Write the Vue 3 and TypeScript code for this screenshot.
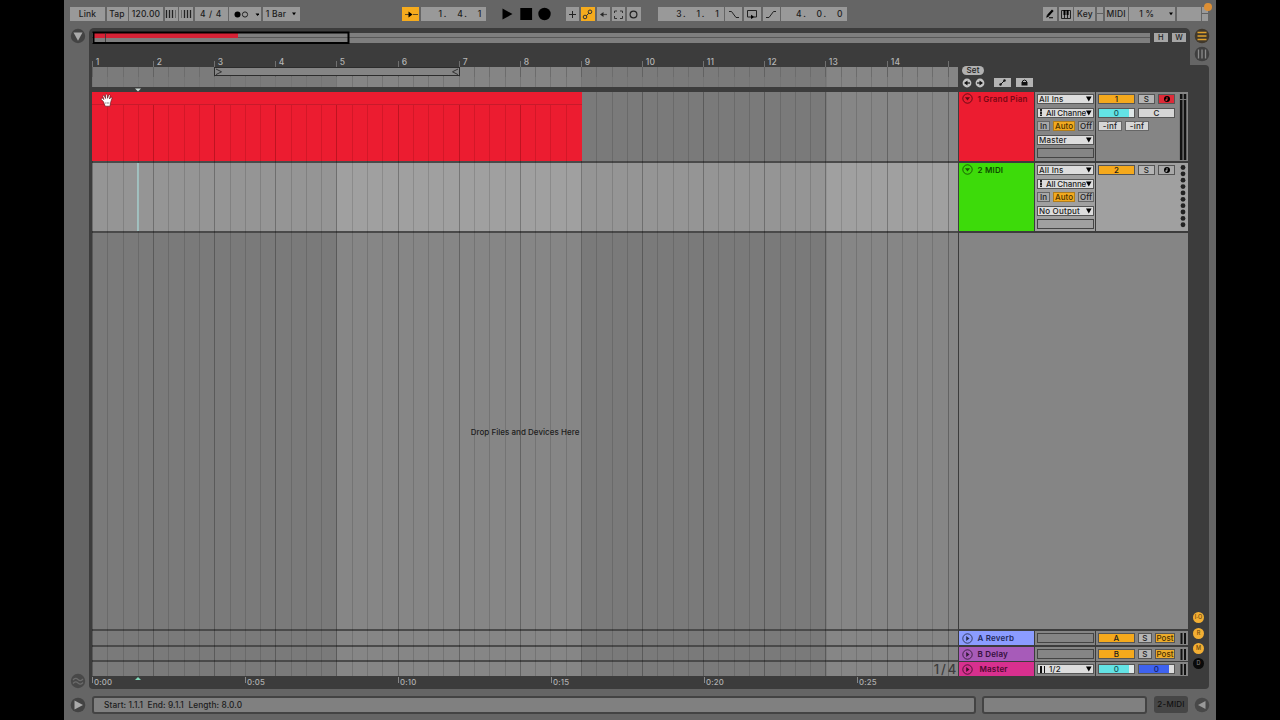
<script setup lang="ts">
interface Track {
  id: string
  name: string
  number: string
  output: string
  armed: boolean
}

const tracks: Track[] = [
  { id: 'piano', name: '1 Grand Pian', number: '1', output: 'Master', armed: true },
  { id: 'midi', name: '2 MIDI', number: '2', output: 'No Output', armed: false },
]
const returns = [
  { id: 'reverb', name: 'A Reverb', letter: 'A' },
  { id: 'delay', name: 'B Delay', letter: 'B' },
]

const BEAT = 15.28
const beats = Array.from({ length: 57 }, (_, i) => ({
  x: Math.round(i * BEAT) + 0.5,
  bar: i % 4 === 0,
}))
const clipBeats = beats.slice(1, 32)
const bars = Array.from({ length: 15 }, (_, i) => ({
  x: Math.round(i * BEAT * 4) + 0.5,
  label: i < 14 ? String(i + 1) : '',
}))
const times = ['0:00', '0:05', '0:10', '0:15', '0:20', '0:25'].map((label, i) => ({
  label,
  x: Math.round(i * 153) + 0.5,
}))
const dots = Array.from({ length: 10 }, (_, i) => 2 + i * 6.36)
</script>

<template>
  <div class="screen">
    <div class="live">
      <header class="toolbar">
        <div class="group g-tempo">
          <span class="b">Link</span>
          <span class="b">Tap</span>
          <span class="b">120.00</span>
          <span class="b"><svg width="12" height="8"><path d="M1.5 0v8M4.5 0v8M7.500 0v8" stroke="#222" stroke-width="1.300" /><path d="M10.500 0v8" stroke="#666" /></svg></span>
          <span class="b"><svg width="12" height="8"><path d="M1.500 0v8" stroke="#666" /><path d="M4.500 0v8M7.500 0v8M10.500 0v8" stroke="#222" stroke-width="1.300" /></svg></span>
          <span class="b sig">4 / 4</span>
          <span class="b"><svg width="28" height="9"><circle cx="6.500" cy="4.500" r="3" /><circle cx="14" cy="4.500" r="2.600" fill="none" stroke="#222" /><path d="M24.500 3.500h4l-2 2.600z" /></svg></span>
          <span class="b quant">1 Bar<svg width="4" height="4"><path d="M0 .5h4L2 3.200z" /></svg></span>
        </div>
        <div class="group g-pos">
          <span class="b on"><svg width="14" height="9"><path d="M1 4.500h5M9 4.500h5" stroke="#222" stroke-opacity=".7" /><path d="M4.500 1.500v6l4-3z" /></svg></span>
          <span class="b num"><i>1.</i><i>4.</i><i>1</i></span>
        </div>
        <svg class="transport" width="50" height="14"><path d="M.5 1.500v11l10-5.500z" /><path d="M18.300 1h11.800v12H18.300z" /><circle cx="42.500" cy="7" r="6.200" /></svg>
        <div class="group g-over">
          <span class="b"><svg width="9" height="9"><path d="M1 4.500h7M4.500 1v7" stroke="#222" /></svg></span>
          <span class="b on"><svg width="11" height="11" fill="none" stroke="#333"><circle cx="3" cy="8" r="1.800" /><circle cx="8" cy="2.800" r="1.800" /><path d="M4.300 6.800l2.500-2.600" /></svg></span>
          <span class="b"><svg width="9" height="9" opacity=".75"><path d="M3 4.500h5" stroke="#333" stroke-width="1.200" /><path d="M4.500 2v5L1 4.500z" /></svg></span>
          <span class="b"><svg width="9" height="9" fill="none" stroke="#333"><path d="M.5 3V1H3M6 1h2.500v2M8.500 6v2.500H6M3 8.500H.5V6" /></svg></span>
          <span class="b"><svg width="9" height="9"><circle cx="4.500" cy="4.500" r="3.400" fill="none" stroke="#222" stroke-width="1.200" /></svg></span>
        </div>
        <div class="group g-loop">
          <span class="b num"><i>3.</i><i>1.</i><i>1</i></span>
          <span class="b"><svg width="12" height="9" fill="none" stroke="#222"><path d="M1 1.500h2.500l4.500 6h3" /></svg></span>
          <span class="b"><svg width="12" height="10"><path d="M5 8H1.500V1.500h9V8H8" fill="none" stroke="#222" /><path d="M5 5.700v4.300l3.500-2.100z" /></svg></span>
          <span class="b"><svg width="12" height="9" fill="none" stroke="#222"><path d="M1 7.500h3l4.500-6H11" /></svg></span>
          <span class="b num"><i>4.</i><i>0.</i><i>0</i></span>
        </div>
        <div class="group g-right">
          <span class="b"><svg width="10" height="10"><path d="M3 6.500L7.800 1.200" stroke="#000" stroke-width="2.200" /><path d="M1.200 8.800l.8-3 2 1.800zM4 8.300h4v1H4z" /></svg></span>
          <span class="b"><svg width="10" height="9"><path d="M.5.5h9v8h-9z" fill="none" stroke="#222" /><path d="M3.500 0v9M6.500 0v9" stroke="#222" /><path d="M2.500 0h2v5h-2zM5.600 0h2v5h-2z" /></svg></span>
          <span class="b">Key</span>
          <span class="b split"></span>
          <span class="b">MIDI</span>
          <span class="b cpu">1 %<svg width="4" height="4"><path d="M0 .5h4L2 3.200z" /></svg></span>
          <span class="b"></span>
          <span class="b split"><i class="alert"></i></span>
        </div>
      </header>

      <main class="body">
        <aside class="rail left">
          <svg width="16" height="16"><circle cx="8" cy="8" r="7.200" fill="#434343" /><path d="M3.500 4.500h9L8 12.800z" fill="#aaa" /></svg>
          <svg width="16" height="16"><circle cx="8" cy="8" r="7.200" fill="#484848" /><path d="M3 7q2.500-3 5-.5t5-.5M3 10.500q2.500-3 5-.5t5-.5" fill="none" stroke="#6b6b6b" stroke-width="1.200" /></svg>
        </aside>

        <section class="panel">
          <div class="overview-row">
            <div class="overview">
              <i class="ov-clip"></i>
              <svg class="ov-frame" width="258" height="13"><path d="M1.500 1.500h255v10.500h-255z" fill="none" stroke="#000" stroke-width="2" /><path d="M13.500 2v9" stroke="#333" stroke-opacity=".8" /></svg>
            </div>
            <span class="hw">H</span><span class="hw">W</span>
          </div>

          <div class="ruler-row">
            <svg class="ruler" width="866" height="48">
              <rect y="23" width="866" height="20" fill="#7b7b7b" />
              <rect x="245" y="23" width="245" height="20" fill="#858585" />
              <rect x="735" y="23" width="131" height="20" fill="#858585" />
              <path v-for="b in beats" :key="b.x" :d="`M${b.x} 23V${b.bar ? 43 : 33}`" :stroke="b.bar ? '#626262' : '#6c6c6c'" />
              <path v-for="b in beats" :key="'l' + b.x" :d="`M${b.x} 33V43`" stroke="#747474" />
              <g v-for="b in bars" :key="b.x">
                <path :d="`M${b.x} 17V23`" stroke="#707070" />
                <text :x="b.x + 3.200" y="21">{{ b.label }}</text>
              </g>
              <rect x="122.500" y="23.500" width="245" height="8" fill="#858585" stroke="#2c2c2c" />
              <path d="M124 25l5.500 2.800-5.500 2.800M366 25l-5.500 2.800 5.500 2.800" fill="none" stroke="#333" />
              <path d="M43 44.500h6l-3 3z" fill="#cfdad6" />
            </svg>
            <div class="set-tools">
              <span class="set">Set</span>
              <div class="set-icons">
                <svg width="10" height="10"><circle cx="5" cy="5" r="4.400" fill="#c4c4c4" /><path d="M4 5h4" stroke="#222" stroke-width="1.300" /><path d="M5.500 2.500v5L2 5z" /></svg>
                <svg width="10" height="10"><circle cx="5" cy="5" r="4.400" fill="#c4c4c4" /><path d="M2 5h4" stroke="#222" stroke-width="1.300" /><path d="M4.500 2.500v5L8 5z" /></svg>
                <svg width="17" height="9"><path d="M0 0h17v9H0z" fill="#b4b4b4" /><path d="M6.500 6.500l4-4" stroke="#111" /><circle cx="6.500" cy="6.500" r="1.200" /><circle cx="10.500" cy="2.500" r="1.200" /></svg>
                <svg width="17" height="9"><path d="M0 0h17v9H0z" fill="#b4b4b4" /><path d="M5.500 4h6v3.500h-6z" /><path d="M6.500 4V3q2-2 4 0v1" fill="none" stroke="#111" /></svg>
              </div>
            </div>
          </div>

          <div class="work">
            <div class="arrangement">
              <div class="lane first">
                <div class="clip">
                  <div class="clip-title"></div>
                  <svg width="490" height="56"><path v-for="b in clipBeats" :key="b.x" :d="`M${b.x} 0V56`" stroke="#500" :stroke-opacity="b.bar ? 0.3 : 0.16" /></svg>
                </div>
              </div>
              <div class="lane second"></div>
              <div class="lane drop"><span>Drop Files and Devices Here</span></div>
              <div class="lane small"></div>
              <div class="lane small"></div>
              <div class="lane small"></div>
              <svg class="grid-lines" width="866" height="584">
                <path v-for="b in beats" :key="b.x" :d="`M${b.x} 0V584`" :stroke-opacity="b.bar ? 0.26 : 0.13" stroke="#000" />
                <path d="M46 71V139" stroke="#a3c6c5" stroke-width="1.800" />
              </svg>
              <svg class="cursor" width="14" height="15"><path d="M3.400 8.500L1 6.300q0-1.500 1.500-1L4 6.500 2.700 3q.5-1.400 1.600-.3L5.600 5.500 5.500 1.800q.9-1.300 1.700 0l.4 3.500L8.700 2q1.100-.9 1.500.4L9.500 6l1.400-1.800q1.200-.4 1.100 1l-1.400 4.200-.6 3.800H5.200z" fill="#fff" stroke="#5a0a12" stroke-width=".6" /><path d="M5.800 9v2M7.300 9v2M8.800 9v2" stroke="#777" stroke-width=".6" /></svg>
              <span class="grid-size">1/4</span>
            </div>

            <div class="headers">
              <div v-for="t in tracks" :key="t.id" class="track" :class="t.id">
                <div class="title">
                  <svg width="11" height="11"><circle cx="5.500" cy="5.500" r="4.700" fill="none" stroke="#000" stroke-opacity=".55" /><path d="M3 4.200h5L5.500 7.500z" fill-opacity=".6" /></svg>
                  <span>{{ t.name }}</span>
                </div>
                <div class="io">
                  <span class="sel">All Ins<svg width="6" height="6"><path d="M0 .5h5.600L2.800 5.500z" /></svg></span>
                  <span class="sel chan"><b></b><em>All Channe</em><svg width="6" height="6"><path d="M0 .5h5.600L2.800 5.500z" /></svg></span>
                  <span class="mon"><u>In</u><u class="auto">Auto</u><u>Off</u></span>
                  <span class="sel">{{ t.output }}<svg width="6" height="6"><path d="M0 .5h5.600L2.800 5.500z" /></svg></span>
                  <span class="empty"></span>
                </div>
                <div class="mixer">
                  <div class="controls">
                    <div class="mix-row">
                      <span class="act">{{ t.number }}</span><span class="solo">S</span>
                      <span class="arm" :class="{ armed: t.armed }"><svg width="8" height="8"><circle cx="4" cy="4" r="3" /><path d="M4 2v3" :stroke="t.armed ? '#d33' : '#999'" /><circle cx="3.300" cy="5" r="1" :fill="t.armed ? '#d33' : '#999'" /></svg></span>
                    </div>
                    <template v-if="t.armed">
                      <div class="mix-row"><span class="vol">0</span><span class="pan">C</span></div>
                      <div class="mix-row peaks"><span>-inf</span><span>-inf</span></div>
                    </template>
                  </div>
                  <svg v-if="t.armed" class="meter" width="8" height="66"><path d="M2.200 0v66M6 0v66" stroke="#111" stroke-width="2.600" /><path d="M0 5.500h8" stroke="#777" /></svg>
                  <svg v-else class="meter" width="8" height="65"><circle v-for="d in dots" :key="d" cx="4" :cy="d + 0.500" r="2.400" fill="#222" /></svg>
                </div>
              </div>

              <div class="void"></div>

              <div v-for="r in returns" :key="r.id" class="ret" :class="r.id">
                <div class="title">
                  <svg width="11" height="11"><circle cx="5.500" cy="5.500" r="4.700" fill="none" stroke="#000" stroke-opacity=".6" /><path d="M4.200 3v5l3.300-2.500z" fill-opacity=".7" /></svg>
                  <span>{{ r.name }}</span>
                </div>
                <div class="io"><span class="empty"></span></div>
                <div class="mixer">
                  <div class="mix-row retmix"><span class="act">{{ r.letter }}</span><span class="solo">S</span><span class="post">Post</span></div>
                  <svg class="meter" width="8" height="11"><path d="M2.500 0v11M6 0v11" stroke="#111" stroke-width="2" /></svg>
                </div>
              </div>
              <div class="ret master">
                <div class="title">
                  <svg width="11" height="11"><circle cx="5.500" cy="5.500" r="4.700" fill="none" stroke="#000" stroke-opacity=".6" /><path d="M4.200 3v5l3.300-2.500z" fill-opacity=".7" /></svg>
                  <span>Master</span>
                </div>
                <div class="io"><span class="sel cue"><b></b><b></b><em>1/2</em><svg width="6" height="6"><path d="M0 .5h5.600L2.800 5.500z" /></svg></span></div>
                <div class="mixer">
                  <div class="mix-row"><span class="vol">0</span><span class="pan cuevol">0</span></div>
                  <svg class="meter" width="8" height="11"><path d="M2.500 0v11M6 0v11" stroke="#111" stroke-width="2" /></svg>
                </div>
              </div>
            </div>
          </div>

          <svg class="time-ruler" width="866" height="13">
            <g v-for="t in times" :key="t.x">
              <path :d="`M${t.x} 1V7`" stroke="#888" />
              <text :x="t.x + 1.500" y="9">{{ t.label }}</text>
            </g>
            <path d="M43 4h6l-3-3z" fill="#7fd6b8" />
          </svg>
        </section>

        <aside class="rail right">
          <div class="views">
            <svg width="16" height="16"><circle cx="8" cy="8" r="7.300" fill="#40382c" /><path d="M3.500 4.500h9M3.500 8h9M3.500 11.500h9" stroke="#e0a22c" stroke-width="1.700" /></svg>
            <svg width="16" height="16"><circle cx="8" cy="8" r="7.300" fill="#3f3f3f" /><path d="M4.500 3.500v9M8 3.500v9M11.500 3.500v9" stroke="#8a8a8a" stroke-width="1.300" /></svg>
          </div>
          <div class="edge">
            <span class="dot">I·O</span><span class="dot">R</span><span class="dot">M</span><span class="dot off">D</span>
          </div>
        </aside>
      </main>

      <footer class="status">
        <svg width="16" height="16"><circle cx="8" cy="8" r="7.300" fill="#434343" /><path d="M4.500 3.500v9L13 8z" fill="#aaa" /></svg>
        <div class="info">Start: 1.1.1&nbsp; End: 9.1.1&nbsp; Length: 8.0.0</div>
        <div class="info blank"></div>
        <span class="sel-track">2-MIDI</span>
        <svg width="16" height="16"><circle cx="8" cy="8" r="7.300" fill="#484848" /><path d="M11.500 4v8L4 8z" fill="#999" /></svg>
      </footer>
    </div>
  </div>
</template>

<style>
body { background: #000; }
</style>

<style scoped>
* { box-sizing: border-box; }
svg { display: block; flex: none; }
i, em { font-style: normal; }
u { text-decoration: none; }
.screen { width: 1280px; height: 720px; background: #000; display: flex; justify-content: center; overflow: hidden; font: 500 8px/10px Inter, "Liberation Sans", sans-serif; color: #1c1c1c; letter-spacing: .2px; }
.live { width: 1152px; height: 720px; background: #656565; display: flex; flex-direction: column; }

.toolbar { height: 28px; padding: 7px 0 0 6px; display: flex; align-items: flex-start; }
.group { display: grid; gap: 2px; height: 14px; flex: none; }
.g-tempo { grid-template-columns: 35px 21px 34px 13px 14px 33px 32px 37px; gap: 1.500px; width: 230px; }
.g-pos { grid-template-columns: 17px 65px; margin-left: 102px; }
.transport { margin-left: 16px; }
.g-over { grid-template-columns: repeat(5, 13.400px); gap: 1.900px; margin-left: 14px; }
.g-loop { grid-template-columns: 66px 17px 17px 17px 66px; gap: 1.700px; margin-left: 17px; }
.g-right { grid-template-columns: 14px 14px 21px 6px 23px 46px 24px 6px; gap: 1.600px; margin-left: 196px; }
.b { background: #999; display: flex; align-items: center; justify-content: center; white-space: nowrap; font-size: 8.500px; min-width: 0; position: relative; }
.on { background: #f5ab1d; }
.sig { letter-spacing: .6px; }
.num { justify-content: flex-end; gap: 9px; padding-right: 3px; font-size: 8.500px; letter-spacing: 1.800px; }
.num i { min-width: 5px; }
.quant { gap: 6px; }
.cpu { gap: 15px; padding-left: 8px; }
.split { background: linear-gradient(#999 0 6px, #606060 6px 7px, #999 7px); }
.alert { position: absolute; top: -4px; left: 1.500px; width: 8px; height: 8px; border-radius: 50%; background: #dc8f35; }

.body { height: 661px; display: flex; }
.rail.left { width: 25px; display: flex; flex-direction: column; justify-content: space-between; padding-left: 6px; }
.panel { width: 1101px; background: #3c3c3c; border-radius: 5px 5px 0 4px; padding: 3px 0 0 3px; display: flex; flex-direction: column; }
.overview-row { height: 13px; display: flex; align-items: center; gap: 4px; }
.overview { width: 1058px; height: 10px; background: linear-gradient(#7e7e7e 0 4px, #585858 4px 5px, #7e7e7e 5px); position: relative; }
.ov-clip { display: block; width: 145px; height: 5px; margin-left: 1px; background: #d52235; }
.ov-frame { position: absolute; left: 0; top: -1.500px; }
.hw { width: 14px; height: 9px; background: #a5a5a5; text-align: center; font-size: 7.500px; line-height: 9px; }
.ruler-row { height: 48px; display: flex; }
.ruler { fill: #b5b5b5; font-size: 8.500px; }
.set-tools { padding: 22px 0 0 4px; display: flex; flex-direction: column; gap: 2.500px; align-items: flex-start; }
.set { background: #b0b0b0; border-radius: 5px; width: 22px; height: 9px; line-height: 9.500px; text-align: center; font-size: 8px; }
.set-icons { display: flex; align-items: center; fill: #111; }
.set-icons svg:nth-child(2) { margin-left: 3px; }
.set-icons svg:nth-child(3) { margin-left: 9px; }
.set-icons svg:nth-child(4) { margin-left: 5px; }

.work { height: 584px; display: flex; gap: 1px; }
.arrangement { width: 866px; display: grid; grid-template-rows: 69px 68px 396px 14px 13px 14px; row-gap: 2px; position: relative; background: #4a4a4a; }
.lane { background: linear-gradient(90deg, #7a7a7a 0 245px, #868686 245px 490px, #7a7a7a 490px 735px, #868686 735px); }
.second { background: linear-gradient(90deg, #959595 0 245px, #a0a0a0 245px 490px, #959595 490px 735px, #a0a0a0 735px); }
.clip { width: 490px; height: 100%; background: #ec1c30; position: relative; z-index: 1; }
.clip-title { height: 13px; border-bottom: 1px solid #c81a2b; }
.drop { display: flex; justify-content: center; align-items: center; }
.drop span { font-size: 8px; position: relative; top: .5px; z-index: 2; letter-spacing: .03px; }
.grid-lines { position: absolute; inset: 0; }
.cursor { position: absolute; left: 8px; top: 1px; z-index: 3; }
.grid-size { position: absolute; right: 0; bottom: 0; font-size: 13px; line-height: 14px; color: #3c3c3c; letter-spacing: 1.800px; z-index: 2; }

.headers { width: 229px; display: grid; grid-template-rows: 69px 68px 396px 14px 13px 14px; row-gap: 2px; }
.track, .ret { display: grid; grid-template-columns: 75px 60px 92px; column-gap: 1px; min-height: 0; }
.title { display: flex; align-items: flex-start; gap: 5px; padding: 1px 0 0 2.500px; white-space: nowrap; }
.title span { line-height: 12px; font-weight: 600; }
.piano .title { background: #ec1c30; color: #7b0714; }
.midi .title { background: #3ddb0a; color: #0d4a00; }
.reverb .title { background: #8b9cff; color: #232a5a; }
.delay .title { background: #a75bb9; color: #35103e; }
.master .title { background: #d8308f; color: #4f0a31; }
.ret .title { padding-top: 1px; align-items: center; padding-bottom: 1px; }
.master .title { gap: 7px; }
.io, .mixer, .void { background: #858585; }
.midi .io, .midi .mixer { background: #a0a0a0; }
.io { display: grid; grid-template-rows: repeat(5, 10px); row-gap: 3.600px; padding: 2px 1px 0 2px; }
.ret .io { display: flex; flex-direction: column; }
.sel { background: #ddd; border: 1px solid #555; height: 10px; line-height: 8px; padding: 0 1px; display: flex; align-items: center; justify-content: space-between; white-space: nowrap; overflow: hidden; min-width: 0; }
.sel em { flex: 1; overflow: hidden; min-width: 0; }
.sel b { width: 2px; height: 7px; background: repeating-linear-gradient(#222 0 2px, #777 2px 3px); margin: 0 4px 0 1px; }
.chan em { letter-spacing: -.12px; }
.cue b { width: 1.500px; background: #111; margin: 0 1px; }
.cue em { padding-left: 3px; }
.mon { display: grid; grid-template-columns: 13px 22px 16px; column-gap: 3px; }
.mon u { background: #a8a8a8; border: 1px solid #666; line-height: 8px; text-align: center; letter-spacing: 0; }
.mon .auto { background: #f2aa20; color: #4b3200; border-color: #b07d1c; }
.empty { border: 1px solid #444; height: 10px; }
.mixer { padding: 2px 0 0 2px; display: flex; justify-content: space-between; }
.controls { display: flex; flex-direction: column; gap: 3.600px; }
.mix-row { display: flex; height: 10px; gap: 3px; width: 78px; line-height: 9px; text-align: center; }
.act, .vol, .solo, .arm, .pan, .post { border: 1px solid #555; line-height: 8px; height: 10px; }
.act { width: 37px; background: #f5a91c; }
.solo { width: 17px; background: #b5b5b5; }
.arm { width: 17px; background: #a8a8a8; display: flex; justify-content: center; align-items: center; }
.armed { background: #df2a38; }
.vol { width: 37px; background: linear-gradient(90deg, #63e3e5 0 30px, #e0e8e8 30px); color: #14565a; }
.pan { width: 37px; background: #d6d6d6; }
.cuevol { background: linear-gradient(90deg, #3e62ef 0 30px, #ddd 30px); color: #14236e; }
.peaks span { width: 24px; background: #d6d6d6; border: 1px solid #666; line-height: 8px; }
.retmix .solo { width: 14px; }
.retmix .post { width: 20px; background: #edac2b; color: #4b3200; letter-spacing: 0; }
.meter { margin-right: 1px; }
.time-ruler { fill: #b0b0b0; font-size: 7.800px; }

.rail.right { width: 26px; display: flex; flex-direction: column; }
.views { height: 37px; padding-left: 4px; display: flex; flex-direction: column; gap: 2px; }
.edge { width: 19px; flex: 1; background: #3c3c3c; border-radius: 0 4px 4px 0; display: flex; flex-direction: column; justify-content: flex-end; padding: 0 0 20px 3px; gap: 4.200px; }
.dot { width: 11px; height: 11px; border-radius: 50%; background: #f2ae33; font-size: 5.500px; line-height: 11px; text-align: center; letter-spacing: 0; color: #6b4508; }
.off { background: #0a0a0a; color: #777; }

.status { height: 31px; display: flex; align-items: center; padding-left: 6px; }
.info { width: 884px; height: 18px; margin-left: 6px; border: 2px solid #434343; border-radius: 3px; background: #808080; line-height: 14px; padding-left: 10px; font-size: 8.300px; letter-spacing: .1px; }
.blank { width: 165px; margin-left: 6px; }
.sel-track { width: 34px; height: 17px; margin: 0 6px 0 7px; border-radius: 3px; background: #464646; color: #111; text-align: center; line-height: 17px; }
</style>
